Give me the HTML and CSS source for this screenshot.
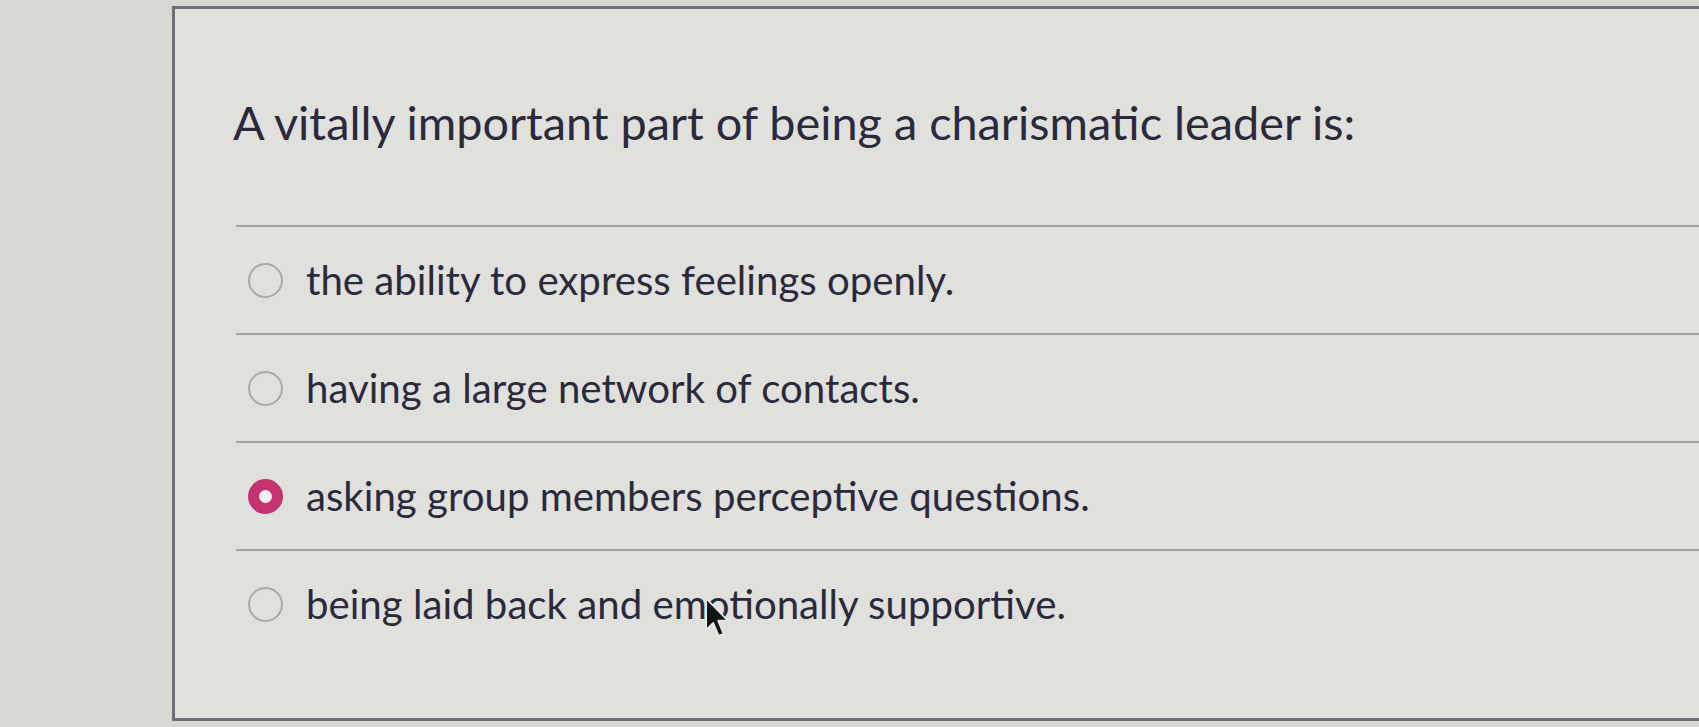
FILE: index.html
```html
<!DOCTYPE html>
<html>
<head>
<meta charset="utf-8">
<link rel="stylesheet" href="styles.css">
</head>
<body>
<div class="page">
  <div class="card">
    <h1 class="question">A vitally important part of being a charismatic leader is:</h1>
    <ul class="options">
      <li class="option"><span class="radio"></span><span class="label">the ability to express feelings openly.</span></li>
      <li class="option"><span class="radio"></span><span class="label">having a large network of contacts.</span></li>
      <li class="option"><span class="radio checked"></span><span class="label">asking group members perceptive questions.</span></li>
      <li class="option"><span class="radio"></span><span class="label">being laid back and em<span class="anchor"><svg class="cursor" width="26" height="44" viewBox="0 0 24 40"><path d="M2 2 L2 31 L8.5 24.5 L13.5 36.5 L18 34.5 L13 22.5 L22 22.5 Z" fill="#121212" stroke="#e8e8e8" stroke-width="1.6" stroke-linejoin="round"/></svg></span>otionally supportive.</span></li>
    </ul>
  </div>
</div>
</body>
</html>
```
FILE: styles.css
```css
html, body {
  margin: 0;
  padding: 0;
  background: #d7d7d4;
  overflow: hidden;
}
.page {
  width: 1699px;
  height: 727px;
  padding-top: 6px;
  padding-left: 172px;
  box-sizing: border-box;
}
.card {
  height: 715px;
  border: 3px solid #6e6e74;
  border-right: none;
  background: #e0e0dd;
  box-sizing: border-box;
  padding-left: 58px;
  font-family: Lato, "Open Sans", sans-serif;
  color: #2b2a3c;
}
.question {
  margin: 0;
  padding-top: 89px;
  height: 216px;
  box-sizing: border-box;
  font-size: 46.8px;
  font-weight: 400;
  line-height: 48px;
}
.options {
  list-style: none;
  margin: 0 0 0 3px;
  padding: 0;
}
.option {
  height: 108px;
  border-top: 2px solid #a3a3a3;
  display: flex;
  align-items: center;
  padding-left: 12px;
  box-sizing: border-box;
}
.radio {
  width: 35px;
  height: 35px;
  box-sizing: border-box;
  border: 2px solid #a9a9a9;
  border-radius: 50%;
  flex: none;
  margin-right: 23px;
}
.radio.checked {
  border: 11px solid #c4336f;
  background: #f4f1f2;
}
.label {
  font-size: 40.2px;
  line-height: 44px;
}
.anchor {
  position: relative;
  display: inline-block;
  width: 0;
}
.cursor {
  position: absolute;
  left: -3px;
  top: -23px;
}
```
